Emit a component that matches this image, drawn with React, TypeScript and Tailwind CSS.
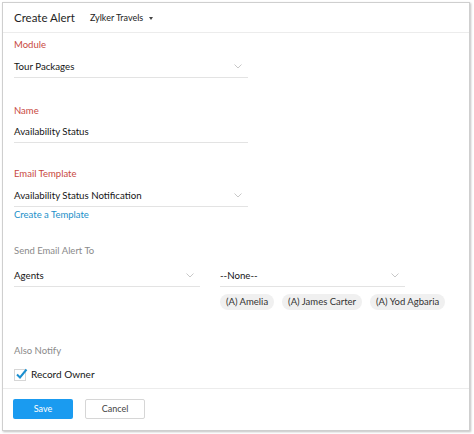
import React from 'react';

const Chevron = () => (
  <svg width="8" height="5" viewBox="0 0 8 5" className="text-[#c8c8c8]">
    <path d="M0.5 0.5 L4 4 L7.5 0.5" fill="none" stroke="currentColor" strokeWidth="1" />
  </svg>
);

const Select = ({ value, width, arrow = true }: { value: string; width: string; arrow?: boolean }) => (
  <div className={`${width} h-[22px] flex items-center justify-between border-b border-[#e3e3e3] pr-[6px]`}>
    <span className="text-[9.7px] text-[#151515]">{value}</span>
    {arrow && <Chevron />}
  </div>
);

const Label = ({ children, className }: { children: React.ReactNode; className: string }) => (
  <div className={`text-[9.5px] leading-[12px] ${className}`}>{children}</div>
);

const Chip = ({ children }: { children: React.ReactNode }) => (
  <span className="h-[16px] px-[6px] rounded-full bg-[#f0f0f0] text-[9.5px] text-[#333] flex items-center">
    {children}
  </span>
);

export default function App() {
  return (
    <div className="w-[474px] h-[434px] bg-white p-[2px]" style={{ fontFamily: 'Lato, "Open Sans", sans-serif' }}>
      <div className="w-[468px] h-[429px] border border-[#cfcfcf] shadow-[1px_1px_2px_rgba(0,0,0,0.25)] flex flex-col">
        {/* header */}
        <div className="h-[30px] flex items-center px-[11px] pt-[1px] border-b border-[#ececec]">
          <span className="text-[11.5px] text-[#1f1f1f]">Create Alert</span>
          <span className="ml-[15px] text-[9px] text-[#222]">Zylker Travels</span>
          <span className="ml-[6px] w-0 h-0 border-l-[2.5px] border-r-[2.5px] border-t-[3px] border-l-transparent border-r-transparent border-t-[#444]" />
        </div>

        {/* form */}
        <div className="flex-1 px-[11px] pt-[6px]">
          <Label className="text-[#c8483e]">Module</Label>
          <div className="mt-[5px]"><Select value="Tour Packages" width="w-[234px]" /></div>

          <div className="mt-[27px]"><Label className="text-[#c8483e]">Name</Label></div>
          <div className="mt-[4px]"><Select value="Availability Status" width="w-[234px]" arrow={false} /></div>

          <div className="mt-[25px]"><Label className="text-[#c8483e]">Email Template</Label></div>
          <div className="mt-[5px]"><Select value="Availability Status Notification" width="w-[234px]" /></div>
          <div className="mt-[2px]"><Label className="text-[#1a8fc9]">Create a Template</Label></div>

          <div className="mt-[24px]"><Label className="text-[#8a8a8a]">Send Email Alert To</Label></div>
          <div className="mt-[8px] flex gap-[20px]">
            <Select value="Agents" width="w-[186px]" />
            <div>
              <Select value="--None--" width="w-[185px]" />
              <div className="mt-[7px] flex gap-[8px]">
                <Chip>(A) Amelia</Chip>
                <Chip>(A) James Carter</Chip>
                <Chip>(A) Yod Agbaria</Chip>
              </div>
            </div>
          </div>

          <div className="mt-[35px]"><Label className="text-[#8a8a8a]">Also Notify</Label></div>
          <div className="mt-[10px] flex items-center gap-[5px]">
            <span className="w-[12px] h-[12px] border border-[#d6d6d6] bg-white relative">
              <svg width="13" height="12" viewBox="0 0 13 12" className="absolute left-[0px] top-[-2px]">
                <path d="M2 6.5 L5 9.5 L11.5 1.5" fill="none" stroke="#1b8fd0" strokeWidth="2" />
              </svg>
            </span>
            <span className="text-[10px] text-[#151515]">Record Owner</span>
          </div>
        </div>

        {/* footer */}
        <div className="h-[42px] border-t border-[#ececec] flex items-center gap-[12px] px-[10px] pb-[1px]">
          <button className="w-[60px] h-[20px] rounded-[2px] bg-[#1a9bf0] text-white text-[9px]">Save</button>
          <button className="w-[60px] h-[20px] rounded-[2px] border border-[#d6d6d6] bg-white text-[#444] text-[9px]">Cancel</button>
        </div>
      </div>
    </div>
  );
}
